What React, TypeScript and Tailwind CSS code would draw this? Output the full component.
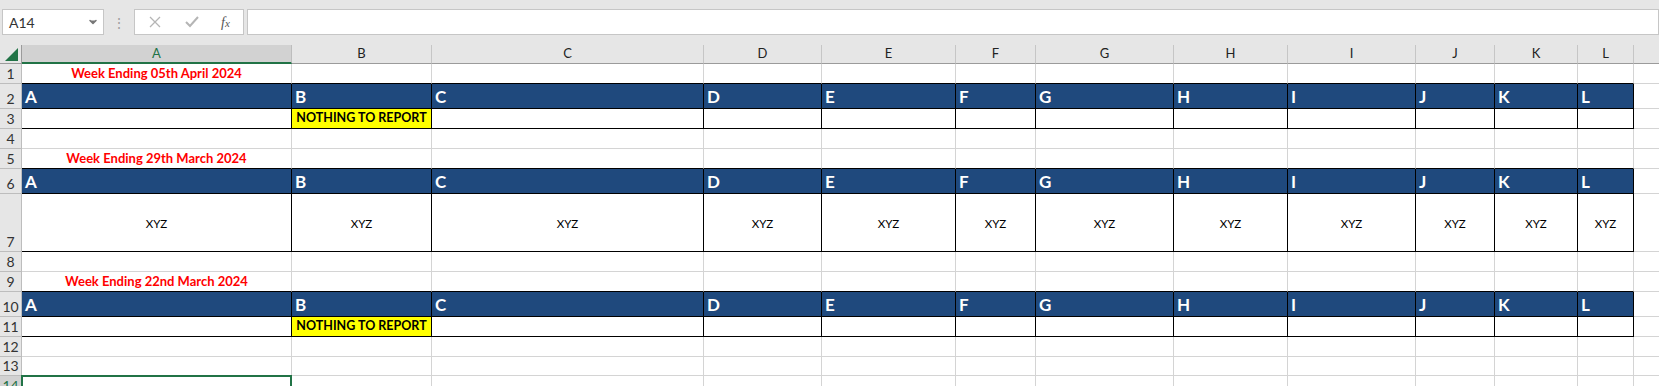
import { ChevronDown } from "lucide-react";

const letters = ["A", "B", "C", "D", "E", "F", "G", "H", "I", "J", "K", "L"];

const gridCols =
    "grid grid-rows-[minmax(0,1fr)] grid-cols-[22px_270px_140px_272px_118px_134px_80px_138px_114px_128px_79px_83px_56px_1fr]";

type RowKind = "plain" | "title" | "head" | "report" | "data";

function RowHead({ n, active }: { n: number; active?: boolean }) {
    return (
        <div
            className={`flex items-end justify-center overflow-hidden border-r border-b border-[#bdbdbd] pb-[1px] text-[14px] leading-[16px] ${
                active ? "bg-[#d2d2d2] text-[#217346]" : "bg-[#e6e6e6] text-[#333]"
            }`}
        >
            {n}
        </div>
    );
}

function SheetRow({
    n,
    kind,
    h,
    title,
    active,
}: {
    n: number;
    kind: RowKind;
    h: string;
    title?: string;
    active?: boolean;
}) {
    return (
        <div className={`${gridCols} ${h}`}>
            <RowHead n={n} active={active} />
            {letters.map((l, i) => {
                if (kind === "head") {
                    return (
                        <div
                            key={l}
                            className="flex items-center overflow-hidden border-r border-b border-black bg-[#1f497d] pl-[3px] pt-[1px] text-[17px] font-bold text-white"
                        >
                            {l}
                        </div>
                    );
                }
                if (kind === "report") {
                    return (
                        <div
                            key={l}
                            className={`flex items-center justify-center overflow-hidden border-r border-b border-black text-[12.5px] font-bold whitespace-nowrap text-black ${
                                l === "B" ? "bg-[#ffff00]" : "bg-white"
                            }`}
                        >
                            {l === "B" ? "NOTHING TO REPORT" : ""}
                        </div>
                    );
                }
                if (kind === "data") {
                    return (
                        <div
                            key={l}
                            className="flex items-center justify-center border-r border-b border-black bg-white pt-[2px] text-[11.5px] text-black"
                        >
                            XYZ
                        </div>
                    );
                }
                if (kind === "title") {
                    // red heading sits centred in column A, bottom border closes off the blue table below
                    return (
                        <div
                            key={l}
                            className="flex items-center justify-center border-r border-b border-r-[#d4d4d4] border-b-black bg-white text-[13px] font-bold whitespace-nowrap text-[#ff0000]"
                        >
                            {i === 0 ? title : ""}
                        </div>
                    );
                }
                if (active && i === 0) {
                    return (
                        <div
                            key={l}
                            className="-mt-px -ml-px border-2 border-[#217346] bg-white"
                        />
                    );
                }
                return (
                    <div key={l} className="border-r border-b border-[#d4d4d4] bg-white" />
                );
            })}
            <div className="border-b border-[#d4d4d4] bg-white" />
        </div>
    );
}

function Toolbar() {
    return (
        <div className="flex h-[45px] items-start bg-[#e6e6e6] pt-[9px] pl-[2px]">
            <div className="flex h-[26px] w-[102px] items-center justify-between border border-[#c6c6c6] bg-white pr-[4px] pl-[6px] text-[14px] text-[#333]">
                <span>A14</span>
                <ChevronDown className="h-[12px] w-[12px] fill-[#777] text-[#777]" strokeWidth={3} />
            </div>
            <div className="flex h-[26px] w-[30px] items-center justify-center text-[14px] text-[#a0a0a0]">
                ⋮
            </div>
            <div className="flex h-[26px] w-[110px] items-center border border-[#c6c6c6] bg-white">
                <svg className="ml-[14px]" width="12" height="12" viewBox="0 0 12 12">
                    <path d="M1 1 L11 11 M11 1 L1 11" stroke="#b5b5b5" strokeWidth="1.3" fill="none" />
                </svg>
                <svg className="ml-[24px]" width="14" height="12" viewBox="0 0 14 12">
                    <path d="M1 6 L5 10 L13 1" stroke="#b5b5b5" strokeWidth="2" fill="none" />
                </svg>
                <span className="ml-[22px] font-['Liberation_Serif',serif] text-[14px] text-[#555] italic">
                    f<span className="text-[11px]">x</span>
                </span>
            </div>
            <div className="ml-[3px] h-[26px] flex-1 border border-[#c6c6c6] bg-white" />
        </div>
    );
}

function ColumnHeader() {
    return (
        <div className={`${gridCols} h-[19px]`}>
            <div className="relative border-r border-b border-[#9b9b9b] bg-[#e6e6e6]">
                <svg className="absolute right-[3px] bottom-[2px]" width="13" height="13" viewBox="0 0 13 13">
                    <path d="M13 0 L13 13 L0 13 Z" fill="#217346" />
                </svg>
            </div>
            {letters.map((l, i) => (
                <div
                    key={l}
                    className={`flex items-center justify-center text-[13px] ${
                        i === 0
                            ? "border-r border-b-2 border-r-[#bdbdbd] border-b-[#217346] bg-[#d2d2d2] text-[#217346]"
                            : "border-r border-b border-r-[#c6c6c6] border-b-[#9b9b9b] bg-[#e6e6e6] text-[#222]"
                    }`}
                >
                    {l}
                </div>
            ))}
            <div className="border-b border-[#9b9b9b] bg-[#e6e6e6]" />
        </div>
    );
}

export default function App() {
    return (
        <div className="h-[386px] w-[1659px] overflow-hidden bg-white font-['Lato',sans-serif]">
            <Toolbar />
            <ColumnHeader />
            <SheetRow n={1} kind="title" h="h-[20px]" title="Week Ending 05th April 2024" />
            <SheetRow n={2} kind="head" h="h-[25px]" />
            <SheetRow n={3} kind="report" h="h-[20px]" />
            <SheetRow n={4} kind="plain" h="h-[20px]" />
            <SheetRow n={5} kind="title" h="h-[20px]" title="Week Ending 29th March 2024" />
            <SheetRow n={6} kind="head" h="h-[25px]" />
            <SheetRow n={7} kind="data" h="h-[58px]" />
            <SheetRow n={8} kind="plain" h="h-[20px]" />
            <SheetRow n={9} kind="title" h="h-[20px]" title="Week Ending 22nd March 2024" />
            <SheetRow n={10} kind="head" h="h-[25px]" />
            <SheetRow n={11} kind="report" h="h-[20px]" />
            <SheetRow n={12} kind="plain" h="h-[20px]" />
            <SheetRow n={13} kind="plain" h="h-[19px]" />
            <SheetRow n={14} kind="plain" h="h-[20px]" active />
        </div>
    );
}
